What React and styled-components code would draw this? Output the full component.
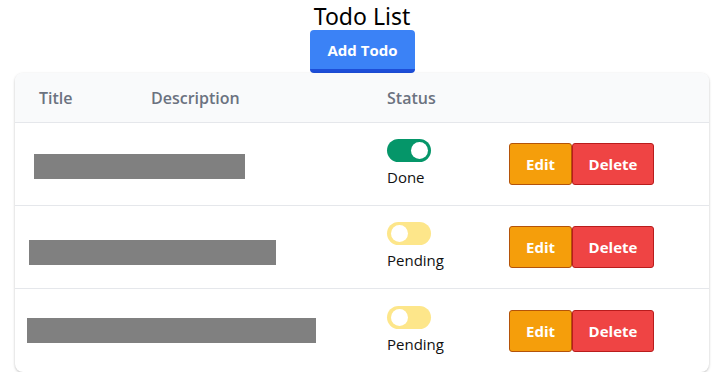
import React, {useState} from "react";
import styled, {createGlobalStyle} from "styled-components";

const todos = [
  {id: 1, done: true, bar: {left: 19, width: 211, dy: 2}},
  {id: 2, done: false, bar: {left: 14, width: 247, dy: 5}},
  {id: 3, done: false, bar: {left: 12, width: 289, dy: 0}},
];

const App = () => {
  const [items, setItems] = useState(todos);

  const toggle = (id) =>
    setItems((prev) =>
      prev.map((t) => (t.id === id ? {...t, done: !t.done} : t))
    );

  return (
    <Page>
      <GlobalStyle />
      <Title>Todo List</Title>
      <AddButton>Add Todo</AddButton>
      <Card>
        <HeaderRow>
          <HeadCell>Title</HeadCell>
          <HeadCell>Description</HeadCell>
          <HeadCell>Status</HeadCell>
          <HeadCell />
        </HeaderRow>
        {items.map((todo) => (
          <Row key={todo.id}>
            <RedactedCell>
              <Redacted
                $left={todo.bar.left}
                $width={todo.bar.width}
                $dy={todo.bar.dy}
              />
            </RedactedCell>
            <StatusCell>
              <Switch $on={todo.done} onClick={() => toggle(todo.id)}>
                <Knob $on={todo.done} />
              </Switch>
              <StatusLabel>{todo.done ? "Done" : "Pending"}</StatusLabel>
            </StatusCell>
            <Actions>
              <EditButton>Edit</EditButton>
              <DeleteButton>Delete</DeleteButton>
            </Actions>
          </Row>
        ))}
      </Card>
    </Page>
  );
};

export default App;

const GlobalStyle = createGlobalStyle`
  body {
    margin: 0;
    background: #fff;
    font-family: "Open Sans", "Noto Sans", Arial, sans-serif;
  }
`;

const Page = styled.div`
  display: flex;
  flex-direction: column;
  align-items: center;
  padding: 0 12px 0 15px;
`;

const Title = styled.h1`
  margin: 0;
  height: 30px;
  font-family: "Noto Sans", "Open Sans", sans-serif;
  font-size: 23px;
  font-weight: 400;
  line-height: 32px;
  color: #000;
`;

const AddButton = styled.button`
  width: 105px;
  height: 43px;
  margin-left: 1px;
  border: none;
  border-bottom: 4px solid #1d4ed8;
  border-radius: 4px;
  background: #3b82f6;
  color: #fff;
  font-family: "Open Sans", sans-serif;
  font-size: 15px;
  font-weight: 700;
  cursor: pointer;
`;

const Card = styled.div`
  align-self: stretch;
  background: #fff;
  border-radius: 8px;
  box-shadow: 0 1px 3px rgba(0, 0, 0, 0.18), 0 1px 2px rgba(0, 0, 0, 0.08);
  overflow: hidden;
`;

const columns = "112px 236px 122px 1fr";

const HeaderRow = styled.div`
  display: grid;
  grid-template-columns: ${columns};
  height: 49px;
  align-items: center;
  background: #f9fafb;
  border-bottom: 1px solid #e5e7eb;
`;

const HeadCell = styled.div`
  padding-left: 24px;
  font-size: 16px;
  font-weight: 600;
  color: #6b7280;
`;

const Row = styled.div`
  display: grid;
  grid-template-columns: ${columns};
  height: 82px;
  align-items: center;
  border-bottom: 1px solid #e5e7eb;

  &:last-child {
    border-bottom: none;
    height: 83px;
  }
`;

const RedactedCell = styled.div`
  grid-column: 1 / span 2;
`;

const Redacted = styled.div`
  margin-left: ${(p) => p.$left}px;
  margin-top: ${(p) => p.$dy * 2}px;
  width: ${(p) => p.$width}px;
  height: 25px;
  background: #808080;
`;

const StatusCell = styled.div`
  padding-left: 24px;
  margin-top: -2px;
  display: flex;
  flex-direction: column;
  align-items: flex-start;
  gap: 5px;
`;

const Switch = styled.div`
  position: relative;
  width: 44px;
  height: 23px;
  border-radius: 12px;
  background: ${(p) => (p.$on ? "#059669" : "#fde68a")};
  cursor: pointer;
`;

const Knob = styled.span`
  position: absolute;
  top: 3px;
  left: ${(p) => (p.$on ? "24px" : "4px")};
  width: 17px;
  height: 17px;
  border-radius: 50%;
  background: #fff;
`;

const StatusLabel = styled.span`
  font-size: 15px;
  line-height: 20px;
  color: #111;
`;

const Actions = styled.div`
  padding-left: 24px;
  display: flex;
`;

const ActionButton = styled.button`
  height: 42px;
  border-radius: 3px;
  color: #fff;
  font-family: "Open Sans", sans-serif;
  font-size: 15px;
  font-weight: 700;
  cursor: pointer;
`;

const EditButton = styled(ActionButton)`
  width: 63px;
  background: #f59e0b;
  border: 1px solid #b45309;
`;

const DeleteButton = styled(ActionButton)`
  width: 82px;
  background: #ef4444;
  border: 1px solid #b91c1c;
`;
